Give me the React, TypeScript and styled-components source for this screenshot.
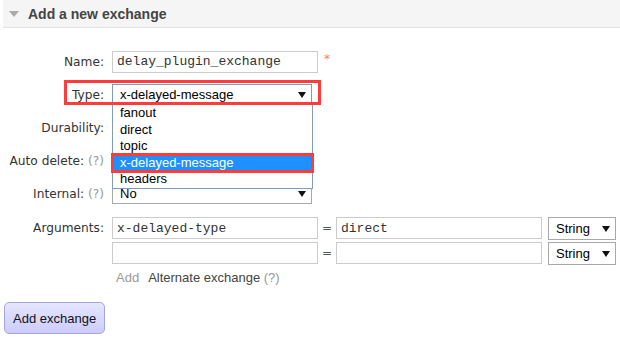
import React from "react";
import styled, { createGlobalStyle } from "styled-components";

const GlobalStyle = createGlobalStyle`
  body {
    margin: 0;
    background: #fff;
    font-family: "DejaVu Sans", Verdana, sans-serif;
    color: #333;
  }
`;

const Page = styled.div`
  width: 620px;
  box-sizing: border-box;
  padding-left: 3px;
`;

const SectionHeader = styled.div`
  height: 27px;
  display: flex;
  align-items: center;
  gap: 9px;
  padding-left: 6px;
  background: #f5f5f5;
  border-bottom: 1px solid #e2e2e2;
`;

const Title = styled.h2`
  margin: 0;
  font-family: "Liberation Sans", Arial, sans-serif;
  font-size: 14px;
  font-weight: bold;
  color: #444;
`;

const Form = styled.div`
  padding-top: 17px;
`;

const Row = styled.div`
  position: relative;
  display: grid;
  grid-template-columns: 101px 1fr;
  column-gap: 8px;
  height: 33px;
  align-items: center;
`;

const ArgsRow = styled(Row)`
  height: auto;
  align-items: start;
  margin-top: 7px;
`;

const Label = styled.label`
  text-align: right;
  font-size: 12.2px;
  white-space: nowrap;
  line-height: 22px;
`;

const Help = styled.span`
  color: #999;
`;

const Field = styled.div`
  display: flex;
  align-items: flex-start;
`;

const TextInput = styled.input`
  width: 206px;
  height: 22px;
  box-sizing: border-box;
  margin: 0;
  padding: 0 4px;
  border: 1px solid #ccc;
  font-family: "Liberation Mono", "Courier New", monospace;
  font-size: 13px;
  color: #333;
  outline: none;
`;

const Required = styled.span`
  margin: 1px 0 0 6px;
  color: #f77;
  font-size: 12px;
`;

const SelectBox = styled.div<{ $open?: boolean; $width?: number; $height?: number }>`
  position: relative;
  width: ${(p) => p.$width ?? 200}px;
  height: ${(p) => p.$height ?? 21}px;
  box-sizing: border-box;
  display: flex;
  align-items: center;
  justify-content: space-between;
  padding: 0 5px 0 7px;
  border: 1px solid ${(p) => (p.$open ? "#7f9db9" : "#a9a9a9")};
  border-bottom-color: ${(p) => (p.$open ? "transparent" : "#a9a9a9")};
  background: #fff;
  font-family: "Liberation Sans", Arial, sans-serif;
  font-size: 13px;
  color: #000;
`;

const OptionList = styled.ul`
  position: absolute;
  top: 100%;
  left: -1px;
  width: 201px;
  box-sizing: border-box;
  margin: 0;
  padding: 0;
  list-style: none;
  background: #fff;
  border: 1px solid #7f9db9;
  z-index: 5;
`;

const Option = styled.li<{ $active?: boolean }>`
  position: relative;
  height: 16.6px;
  line-height: 16.6px;
  padding-left: 7px;
  background: ${(p) => (p.$active ? "#1e90ff" : "transparent")};
  color: ${(p) => (p.$active ? "#fff" : "#000")};
  outline: ${(p) => (p.$active ? "3px solid #ff3b3b" : "none")};
  outline-offset: -1px;
  z-index: ${(p) => (p.$active ? 1 : 0)};
`;

const Annotation = styled.div`
  position: absolute;
  left: 61px;
  top: 2px;
  width: 257px;
  height: 25px;
  box-sizing: border-box;
  border: 3px solid #ff3b3b;
  pointer-events: none;
  z-index: 6;
`;

const ArgLines = styled.div`
  display: flex;
  flex-direction: column;
  gap: 3px;
`;

const ArgLine = styled.div`
  display: flex;
  align-items: flex-start;
  height: 22px;
`;

const Equals = styled.span`
  width: 18px;
  text-align: center;
  line-height: 22px;
  font-size: 12px;
  color: #555;
`;

const TypeSelect = styled(SelectBox)`
  margin-left: 6px;
`;

const AltLinks = styled.div`
  margin: 6px 0 0 113px;
  font-family: "Liberation Sans", Arial, sans-serif;
  font-size: 13px;
  line-height: 15px;
  display: flex;
  gap: 9px;
`;

const Muted = styled.span`
  color: #999;
`;

const Link = styled.span`
  color: #444;
`;

const SubmitButton = styled.button`
  margin: 17px 0 0 1px;
  height: 32px;
  padding: 0 8px;
  border: 1px solid #a6a6dc;
  border-radius: 5px;
  background: linear-gradient(#e6e6ff, #ccccff);
  font-family: "Liberation Sans", Arial, sans-serif;
  font-size: 13px;
  color: #111;
`;

const Arrow = () => (
  <svg width="8" height="6" viewBox="0 0 8 6">
    <polygon points="0,0 8,0 4,6" fill="#111" />
  </svg>
);

const Caret = () => (
  <svg width="10" height="6" viewBox="0 0 10 6">
    <polygon points="0,0 10,0 5,6" fill="#aaa" />
  </svg>
);

const types = ["fanout", "direct", "topic", "x-delayed-message", "headers"];

export default function App() {
  return (
    <Page>
      <GlobalStyle />
      <SectionHeader>
        <Caret />
        <Title>Add a new exchange</Title>
      </SectionHeader>
      <Form>
        <Row>
          <Label>Name:</Label>
          <Field>
            <TextInput defaultValue="delay_plugin_exchange" />
            <Required>*</Required>
          </Field>
        </Row>
        <Row>
          <Label>Type:</Label>
          <SelectBox $open>
            x-delayed-message
            <Arrow />
            <OptionList>
              {types.map((t) => (
                <Option key={t} $active={t === "x-delayed-message"}>
                  {t}
                </Option>
              ))}
            </OptionList>
          </SelectBox>
          <Annotation />
        </Row>
        <Row>
          <Label>Durability:</Label>
          {/* covered by the open type list */}
          <SelectBox />
        </Row>
        <Row>
          <Label>
            Auto delete: <Help>(?)</Help>
          </Label>
          <SelectBox />
        </Row>
        <Row>
          <Label>
            Internal: <Help>(?)</Help>
          </Label>
          <SelectBox $height={20}>
            No
            <Arrow />
          </SelectBox>
        </Row>
        <ArgsRow>
          <Label>Arguments:</Label>
          <ArgLines>
            <ArgLine>
              <TextInput defaultValue="x-delayed-type" />
              <Equals>=</Equals>
              <TextInput defaultValue="direct" />
              <TypeSelect $width={68} $height={23}>
                String
                <Arrow />
              </TypeSelect>
            </ArgLine>
            <ArgLine>
              <TextInput />
              <Equals>=</Equals>
              <TextInput />
              <TypeSelect $width={68} $height={23}>
                String
                <Arrow />
              </TypeSelect>
            </ArgLine>
          </ArgLines>
        </ArgsRow>
        <AltLinks>
          <Muted>Add</Muted>
          <Link>
            Alternate exchange <Muted>(?)</Muted>
          </Link>
        </AltLinks>
        <SubmitButton>Add exchange</SubmitButton>
      </Form>
    </Page>
  );
}
